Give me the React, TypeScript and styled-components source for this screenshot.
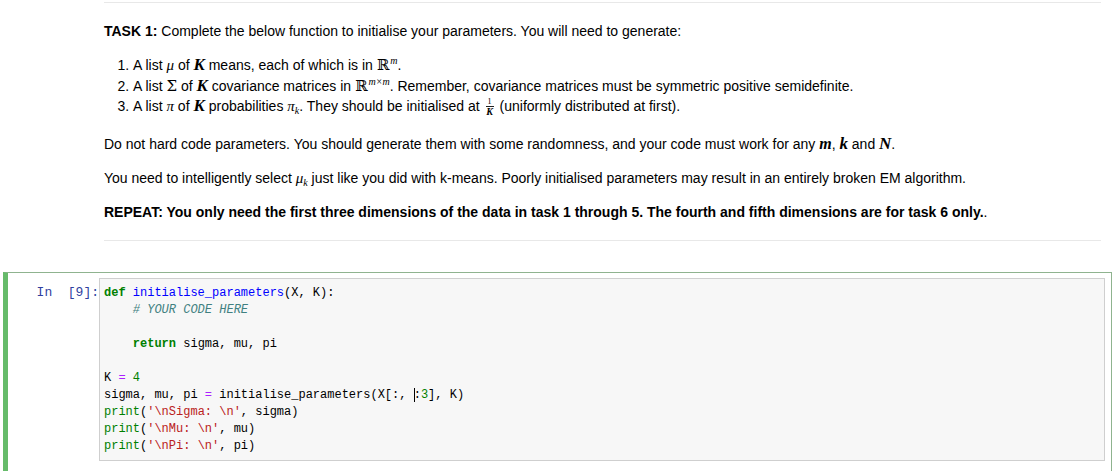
import React from "react";
import styled, { createGlobalStyle } from "styled-components";

const Global = createGlobalStyle`
  html, body { margin: 0; padding: 0; background: #fff; }
  body {
    font-family: "Liberation Sans", Arial, sans-serif;
    font-size: 14px;
    color: #000;
    overflow: hidden;
  }
`;

const Page = styled.div`
  width: 1118px;
  height: 471px;
  overflow: hidden;
`;

const Markdown = styled.div`
  margin: 0 17px 0 104px;
  padding-top: 2px;
`;

const Rule = styled.div`
  height: 0;
  border-top: 1px solid #e8e8e8;
`;

const Para = styled.p<{ $bold?: boolean; $mb?: number; $mt?: number }>`
  margin: ${(p) => p.$mt ?? 0}px 0 ${(p) => p.$mb ?? 14}px 0;
  height: 20px;
  line-height: 20px;
  font-weight: ${(p) => (p.$bold ? 700 : 400)};
  white-space: nowrap;
`;

const List = styled.ol`
  margin: 0 0 17px 0;
  padding-left: 29px;
  li {
    height: 20.5px;
    line-height: 20.5px;
    white-space: nowrap;
  }
`;

const MathVar = styled.i<{ $heavy?: boolean; $size?: number }>`
  font-family: "Liberation Serif", "DejaVu Serif", serif;
  font-style: italic;
  font-weight: ${(p) => (p.$heavy ? 700 : 400)};
  font-size: ${(p) => p.$size ?? 16}px;
  line-height: 0;
`;

const MathUp = styled.span<{ $size?: number }>`
  font-family: "DejaVu Serif", "Liberation Serif", serif;
  font-size: ${(p) => p.$size ?? 15}px;
  line-height: 0;
`;

const Sup = styled.sup`
  font-family: "Liberation Serif", serif;
  font-style: italic;
  font-size: 10px;
  line-height: 0;
  vertical-align: 6px;
  margin-left: 1px;
`;

const Sub = styled.sub`
  font-family: "Liberation Serif", serif;
  font-style: italic;
  font-size: 10px;
  line-height: 0;
  vertical-align: -3px;
`;

const Frac = styled.span`
  display: inline-block;
  position: relative;
  width: 10px;
  height: 10px;
  margin: 0 5px 0 5px;
  vertical-align: baseline;
  font-family: "Liberation Serif", serif;
`;

const FracTop = styled.span`
  position: absolute;
  left: 0;
  right: 0;
  top: -4px;
  text-align: center;
  font-size: 8px;
  line-height: 9px;
`;

const FracBar = styled.span`
  position: absolute;
  left: 1px;
  right: 1px;
  top: 5px;
  border-top: 1px solid #222;
`;

const FracBottom = styled.span`
  position: absolute;
  left: 0;
  right: 0;
  top: 6px;
  text-align: center;
  font-size: 10px;
  line-height: 10px;
  font-style: italic;
  font-weight: 700;
`;

const Cell = styled.div`
  margin: 31px 6px 0 3px;
  border: 1px solid #8fb38f;
  border-left: 5px solid #66bb6a;
  padding: 5px 6px 6px 0;
  display: flex;
  align-items: flex-start;
  height: 240px;
`;

const Prompt = styled.div`
  width: 91px;
  flex: none;
  text-align: right;
  font-family: "Liberation Mono", "DejaVu Sans Mono", monospace;
  font-size: 13px;
  line-height: 17px;
  color: #303f9f;
  padding-top: 6px;
  white-space: pre;
`;

const Editor = styled.div`
  flex: 1;
  height: 170px;
  background: #f7f7f7;
  border: 1px solid #cfcfcf;
  padding: 6px 4px 5px 4px;
  font-family: "Liberation Mono", "DejaVu Sans Mono", monospace;
  font-size: 12px;
  line-height: 17px;
  color: #000;
`;

const Line = styled.div`
  height: 17px;
  white-space: pre;
`;

const Kw = styled.span`
  color: #008000;
  font-weight: 700;
`;
const Def = styled.span`
  color: #0000ff;
`;
const Comment = styled.span`
  color: #408080;
  font-style: italic;
`;
const Op = styled.span`
  color: #aa22ff;
`;
const Num = styled.span`
  color: #008000;
`;
const Builtin = styled.span`
  color: #008000;
`;
const Str = styled.span`
  color: #ba2121;
`;
const Cursor = styled.span`
  border-left: 1px solid #000;
  margin-right: -1px;
`;

const Regular = styled.span`
  font-weight: 400;
`;

export default function App() {
  return (
    <Page>
      <Global />
      <Markdown>
        <Rule />
        <Para $mt={18}>
          <b>TASK 1:</b> Complete the below function to initialise your parameters. You will need to generate:
        </Para>
        <List>
          <li>
            A list <MathVar $size={15}>μ</MathVar> of <MathVar $heavy $size={17}>K</MathVar> means, each of which is in{" "}
            <MathUp>ℝ</MathUp>
            <Sup>m</Sup>.
          </li>
          <li>
            A list <MathUp $size={15}>Σ</MathUp> of <MathVar $heavy $size={17}>K</MathVar> covariance matrices in{" "}
            <MathUp>ℝ</MathUp>
            <Sup>m×m</Sup>. Remember, covariance matrices must be symmetric positive semidefinite.
          </li>
          <li>
            A list <MathVar $size={15}>π</MathVar> of <MathVar $heavy $size={17}>K</MathVar> probabilities{" "}
            <MathVar $size={15}>π</MathVar>
            <Sub>k</Sub>. They should be initialised at
            <Frac>
              <FracTop>1</FracTop>
              <FracBar />
              <FracBottom>K</FracBottom>
            </Frac>
            (uniformly distributed at first).
          </li>
        </List>
        <Para>
          Do not hard code parameters. You should generate them with some randomness, and your code must work for any{" "}
          <MathVar $heavy $size={16}>m</MathVar>, <MathVar $heavy $size={17}>k</MathVar> and{" "}
          <MathVar $heavy $size={17}>N</MathVar>.
        </Para>
        <Para>
          You need to intelligently select <MathVar $size={15}>μ</MathVar>
          <Sub>k</Sub> just like you did with k-means. Poorly initialised parameters may result in an entirely broken EM algorithm.
        </Para>
        <Para $bold $mb={18}>
          REPEAT: You only need the first three dimensions of the data in task 1 through 5. The fourth and fifth dimensions are for task 6 only.
          <Regular>.</Regular>
        </Para>
        <Rule />
      </Markdown>
      <Cell>
        <Prompt>{"In\u00a0\u00a0[9]:"}</Prompt>
        <Editor>
          <Line>
            <Kw>def</Kw> <Def>initialise_parameters</Def>(X, K):
          </Line>
          <Line>
            {"    "}
            <Comment># YOUR CODE HERE</Comment>
          </Line>
          <Line> </Line>
          <Line>
            {"    "}
            <Kw>return</Kw> sigma, mu, pi
          </Line>
          <Line> </Line>
          <Line>
            K <Op>=</Op> <Num>4</Num>
          </Line>
          <Line>
            sigma, mu, pi <Op>=</Op> initialise_parameters(X[:, <Cursor />:<Num>3</Num>], K)
          </Line>
          <Line>
            <Builtin>print</Builtin>(<Str>'\nSigma: \n'</Str>, sigma)
          </Line>
          <Line>
            <Builtin>print</Builtin>(<Str>'\nMu: \n'</Str>, mu)
          </Line>
          <Line>
            <Builtin>print</Builtin>(<Str>'\nPi: \n'</Str>, pi)
          </Line>
        </Editor>
      </Cell>
    </Page>
  );
}
